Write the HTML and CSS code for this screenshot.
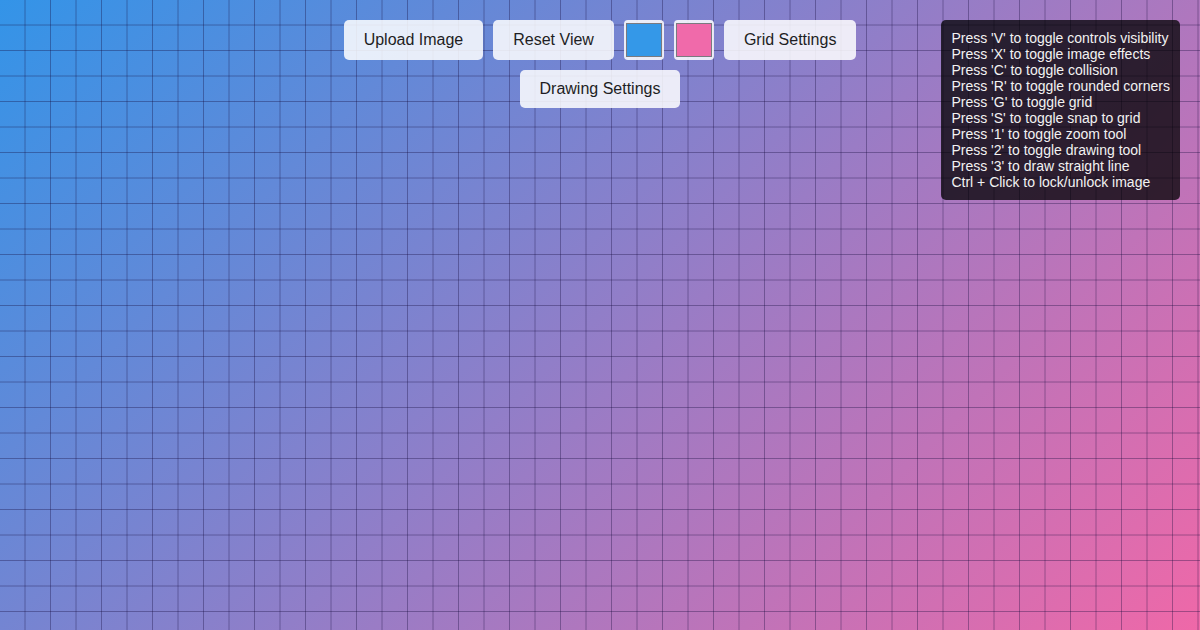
FILE: index.html
```html
<!DOCTYPE html>
<html lang="en">
<head>
<meta charset="utf-8">
<title>Image Canvas</title>
<link rel="stylesheet" href="styles.css">
</head>
<body>
<div class="stage">
  <div class="grid"></div>
  <div class="controls">
    <button class="btn">Upload Image</button>
    <button class="btn">Reset View</button>
    <div class="swatch"><span class="swatch-fill swatch-blue"></span></div>
    <div class="swatch"><span class="swatch-fill swatch-pink"></span></div>
    <button class="btn">Grid Settings</button>
    <button class="btn btn-short">Drawing Settings</button>
  </div>
  <div class="help">
    <div>Press 'V' to toggle controls visibility</div>
    <div>Press 'X' to toggle image effects</div>
    <div>Press 'C' to toggle collision</div>
    <div>Press 'R' to toggle rounded corners</div>
    <div>Press 'G' to toggle grid</div>
    <div>Press 'S' to toggle snap to grid</div>
    <div>Press '1' to toggle zoom tool</div>
    <div>Press '2' to toggle drawing tool</div>
    <div>Press '3' to draw straight line</div>
    <div>Ctrl + Click to lock/unlock image</div>
  </div>
</div>
</body>
</html>
```

FILE: styles.css
```css
html, body {
  margin: 0;
  padding: 0;
  width: 100%;
  height: 100%;
  overflow: hidden;
  font-family: "Liberation Sans", Arial, sans-serif;
}

.stage {
  position: relative;
  width: 100vw;
  height: 100vh;
  background: linear-gradient(135deg, #3394e8 0%, #ef68a8 100%);
}

.grid {
  position: absolute;
  inset: 0;
  background-image:
    linear-gradient(to right, transparent calc(100% - 1px), rgba(20, 10, 60, 0.35) calc(100% - 1px)),
    linear-gradient(to bottom, transparent calc(100% - 1px), rgba(20, 10, 60, 0.35) calc(100% - 1px));
  background-size: 25.5px 25.5px;
  background-position: 0 0;
}

.controls {
  position: absolute;
  top: 20px;
  left: 50%;
  transform: translateX(-50%);
  width: 600px;
  display: flex;
  flex-wrap: wrap;
  justify-content: center;
  gap: 10px;
}

.btn {
  font-family: "Liberation Sans", Arial, sans-serif;
  font-size: 16px;
  color: #1e1e24;
  background: rgba(255, 255, 255, 0.85);
  border: none;
  border-radius: 5px;
  padding: 10px 20px;
  line-height: 18px;
  cursor: pointer;
}

.btn-short {
  align-self: flex-start;
}

.swatch {
  width: 40px;
  height: 40px;
  box-sizing: border-box;
  padding: 3px 2px;
  background: rgba(255, 255, 255, 0.85);
  border-radius: 4px;
  display: flex;
}

.swatch-fill {
  flex: 1;
  border: 1px solid #7a7a80;
}

.swatch-blue { background: #3498e8; }
.swatch-pink { background: #f06aaa; }

.help {
  position: absolute;
  top: 20px;
  right: 20px;
  padding: 10px;
  background: rgba(0, 0, 0, 0.75);
  color: #f2f2f2;
  font-size: 14px;
  line-height: 16px;
  border-radius: 5px;
}
```
